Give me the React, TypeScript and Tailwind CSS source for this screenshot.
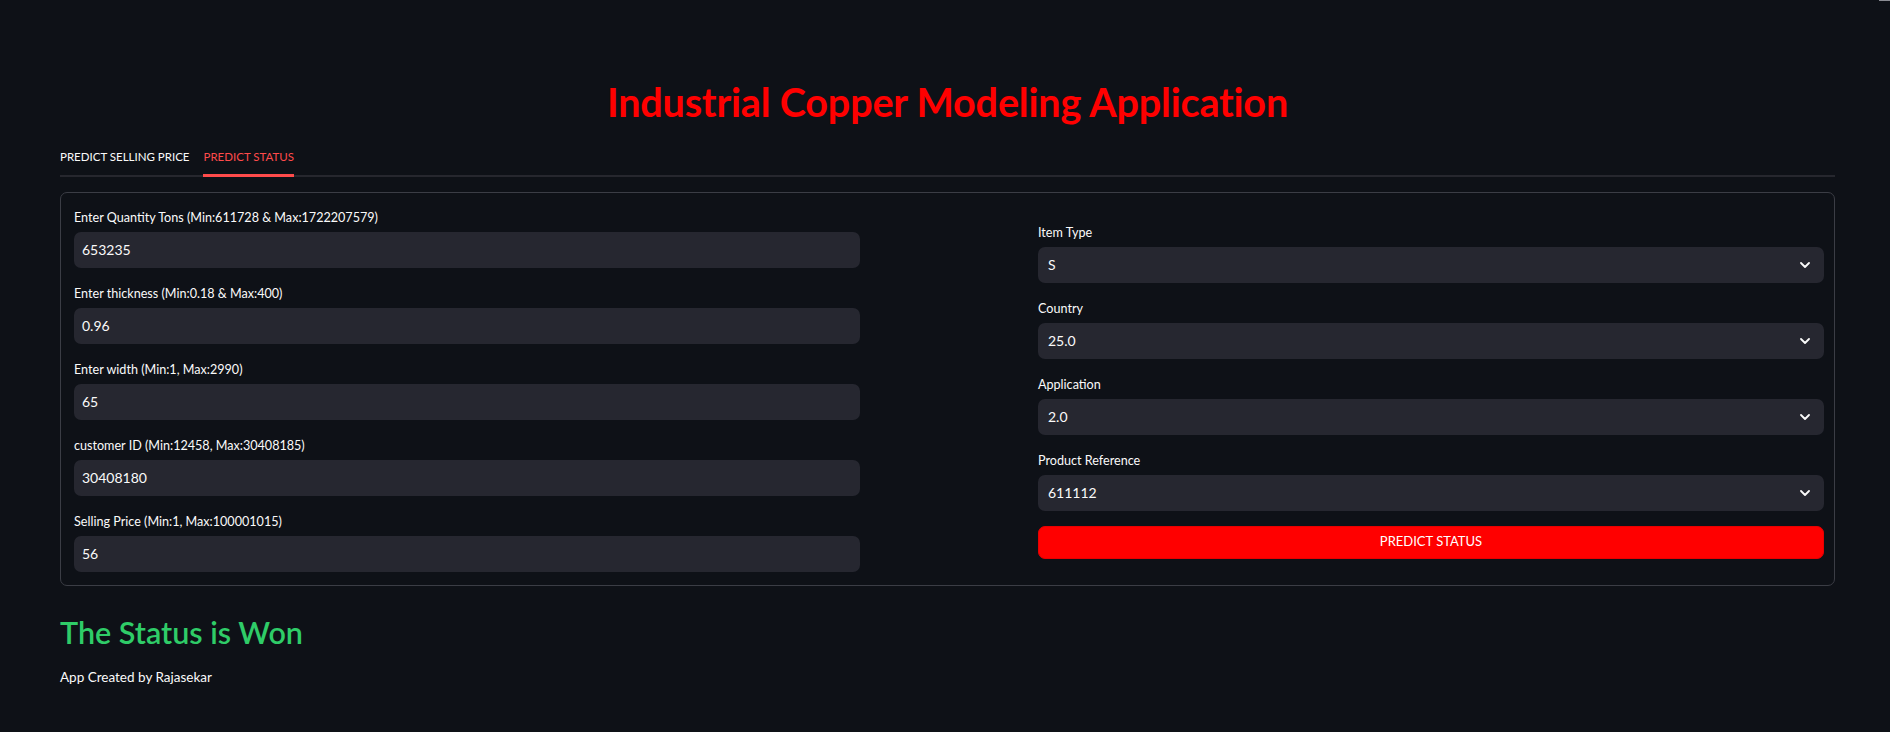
import React from 'react';

// Left column: numeric text inputs.
const numberFields = [
    { label: 'Enter Quantity Tons (Min:611728 & Max:1722207579)', value: '653235' },
    { label: 'Enter thickness (Min:0.18 & Max:400)', value: '0.96' },
    { label: 'Enter width (Min:1, Max:2990)', value: '65' },
    { label: 'customer ID (Min:12458, Max:30408185)', value: '30408180' },
    { label: 'Selling Price (Min:1, Max:100001015)', value: '56' },
];

// Right column: dropdowns.
const selectFields = [
    { label: 'Item Type', value: 'S' },
    { label: 'Country', value: '25.0' },
    { label: 'Application', value: '2.0' },
    { label: 'Product Reference', value: '611112' },
];

const Chevron: React.FC = () => (
    <svg width="10" height="6" viewBox="0 0 10 6" fill="none" className="shrink-0">
        <polyline points="1,1 5,5 9,1" stroke="#fafafa" strokeWidth="1.8" strokeLinecap="round" strokeLinejoin="round" />
    </svg>
);

const FieldLabel: React.FC<{ children: React.ReactNode }> = ({ children }) => (
    <div className="mb-[3px] flex h-[21px] items-center text-[12.6px] text-[#fafafa]">{children}</div>
);

const App: React.FC = () => {
    return (
        <div className="relative min-h-screen bg-[#0e1117] font-['Lato',sans-serif] text-[#fafafa]">
            <div className="absolute right-0 top-0 h-px w-[11px] bg-[#8a8c93]" />
            <div className="pl-[60px] pr-[55px] pb-10">
                <h1 className="pt-[78px] text-center text-[39.6px] font-bold leading-[1.2] tracking-[-0.2px] text-[#ff0000]">
                    Industrial Copper Modeling Application
                </h1>

                <div className="mt-[14px] flex gap-[14px] border-b-2 border-[#26272e]">
                    <div className="-mb-[2px] flex h-[37px] items-center border-b-2 border-transparent text-[11.5px] uppercase text-[#fafafa]">
                        Predict Selling Price
                    </div>
                    <div className="-mb-[2px] flex h-[37px] items-center border-b-[3px] border-[#ff4b4b] text-[11.5px] uppercase text-[#ff4b4b]">
                        Predict Status
                    </div>
                </div>

                <div className="mt-[15px] rounded-[7px] border border-[#3b3d45] pb-[13px] pl-[13px] pr-[10px] pt-[15px]">
                    <div className="grid grid-cols-[1fr_178px_1fr]">
                        <div className="flex flex-col gap-[16px]">
                            {numberFields.map((field) => (
                                <div key={field.label}>
                                    <FieldLabel>{field.label}</FieldLabel>
                                    <div className="flex h-[36px] items-center rounded-[7px] bg-[#262730] px-[8px] text-[14px]">
                                        {field.value}
                                    </div>
                                </div>
                            ))}
                        </div>
                        <div />
                        <div className="flex flex-col pt-[15px]">
                            <div className="flex flex-col gap-[16px]">
                                {selectFields.map((field) => (
                                    <div key={field.label}>
                                        <FieldLabel>{field.label}</FieldLabel>
                                        <div className="flex h-[36px] items-center justify-between rounded-[7px] bg-[#262730] pl-[10px] pr-[14px] text-[14px]">
                                            <span>{field.value}</span>
                                            <Chevron />
                                        </div>
                                    </div>
                                ))}
                            </div>
                            <button className="mt-[15px] flex h-[33px] items-center justify-center rounded-[7px] border border-[#e80000] bg-[#ff0000] text-[13px] uppercase text-white">
                                Predict Status
                            </button>
                        </div>
                    </div>
                </div>

                <h2 className="mt-[28px] text-[30.5px] font-semibold leading-[1.2] text-[#2fcc68]">The Status is Won</h2>
                <p className="mt-[17px] text-[13.5px] leading-[1.5]">App Created by Rajasekar</p>
            </div>
        </div>
    );
};

export default App;
